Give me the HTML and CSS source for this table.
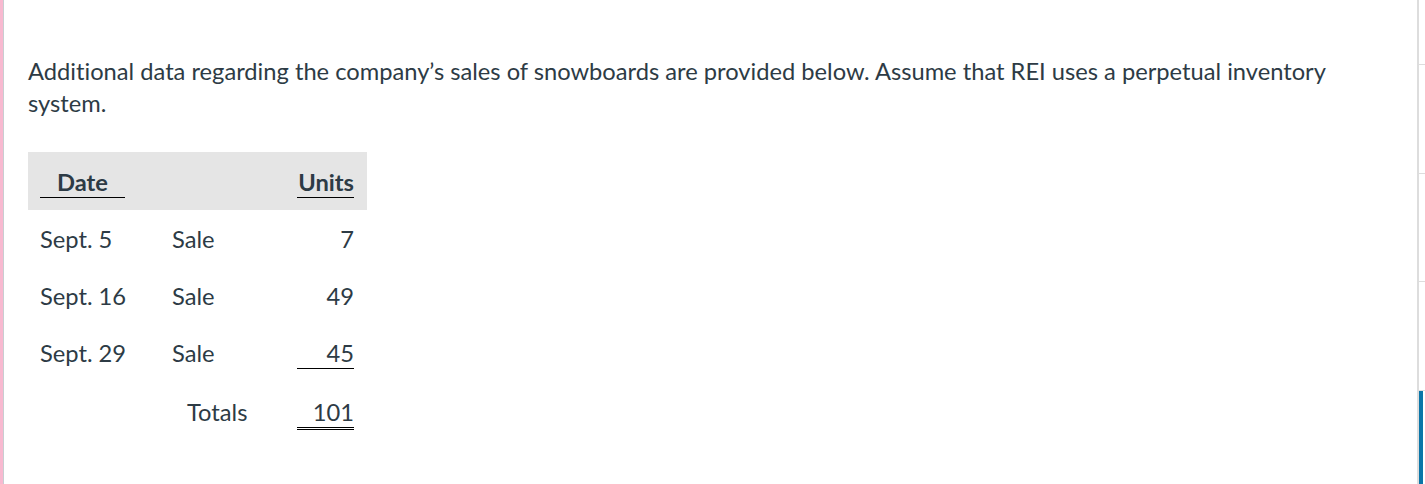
FILE: index.html
```html
<!DOCTYPE html>
<html lang="en">
<head>
<meta charset="utf-8">
<title>Snowboard sales</title>
<link rel="stylesheet" href="styles.css">
</head>
<body>
<div class="page">
  <div class="edge"></div>
  <main class="content">
    <p class="intro">Additional data regarding the company’s sales of snowboards are provided below. Assume that REI uses a perpetual inventory system.</p>
    <table class="sales">
      <thead>
        <tr>
          <th class="c1"><span class="hdr date">Date</span></th>
          <th class="c2"></th>
          <th class="c3"><span class="hdr units">Units</span></th>
        </tr>
      </thead>
      <tbody>
        <tr><td class="c1">Sept. 5</td><td class="c2">Sale</td><td class="c3"><span class="num">7</span></td></tr>
        <tr><td class="c1">Sept. 16</td><td class="c2">Sale</td><td class="c3"><span class="num">49</span></td></tr>
        <tr><td class="c1">Sept. 29</td><td class="c2">Sale</td><td class="c3"><span class="num single">45</span></td></tr>
        <tr class="total"><td class="c1"></td><td class="c2 totals">Totals</td><td class="c3"><span class="num double">101</span></td></tr>
      </tbody>
    </table>
  </main>
  <aside class="rail">
    <div class="tick t1"></div>
    <div class="tick t2"></div>
    <div class="tick t3"></div>
    <div class="tick t4"></div>
    <div class="active"></div>
  </aside>
</div>
</body>
</html>
```

FILE: styles.css
```css
html, body {
  margin: 0;
  padding: 0;
  background: #ffffff;
}
body {
  font-family: Lato, "Open Sans", "Liberation Sans", sans-serif;
  color: #2d3b45;
  font-variant-ligatures: none;
}
.page {
  display: flex;
  width: 1425px;
  height: 484px;
  overflow: hidden;
}
.edge {
  width: 3px;
  flex: 0 0 3px;
  background: #f8b9d0;
  border-right: 1px solid #c8ced2;
}
.content {
  flex: 1;
  padding: 55px 0 0 24px;
  min-width: 0;
}
.intro {
  margin: 0;
  width: 1370px;
  font-size: 23.7px;
  line-height: 32px;
}
.sales {
  margin-top: 33px;
  border-collapse: collapse;
  font-size: 23.7px;
  line-height: 30px;
}
.sales th, .sales td {
  padding: 0;
  vertical-align: top;
  box-sizing: border-box;
}
.sales thead th {
  background: #e5e5e5;
  height: 58px;
  padding-top: 15px;
  font-weight: 700;
}
.sales tbody td {
  height: 57px;
  padding-top: 14px;
}
.sales tbody tr.total td {
  padding-top: 16px;
}
.c1 {
  width: 132px;
  padding-left: 12px !important;
  text-align: left;
}
.c2 {
  width: 125px;
  padding-left: 12px !important;
  text-align: left;
}
.c3 {
  width: 82px;
  padding-left: 12px !important;
  padding-right: 13px !important;
  text-align: right;
}
.hdr {
  display: inline-block;
  border-bottom: 1px solid #000;
  line-height: 30px;
}
.hdr.date {
  width: 85px;
  text-align: center;
}
.hdr.units {
  width: 57px;
  text-align: right;
}
.num {
  display: inline-block;
  width: 57px;
  text-align: right;
}
.num.single {
  border-bottom: 1px solid #000;
}
.num.double {
  border-bottom: 3px double #000;
}
.totals {
  padding-left: 27px !important;
}
.rail {
  flex: 0 0 6px;
  width: 6px;
  margin-left: auto;
  border-left: 2px solid #dddddd;
  display: flex;
  flex-direction: column;
}
.tick {
  border-bottom: 1px solid #dddddd;
}
.t1 { height: 64px; }
.t2 { height: 108px; }
.t3 { height: 107px; }
.t4 { height: 108px; }
.active {
  flex: 1;
  width: 4px;
  background: #0b76a8;
}
```
